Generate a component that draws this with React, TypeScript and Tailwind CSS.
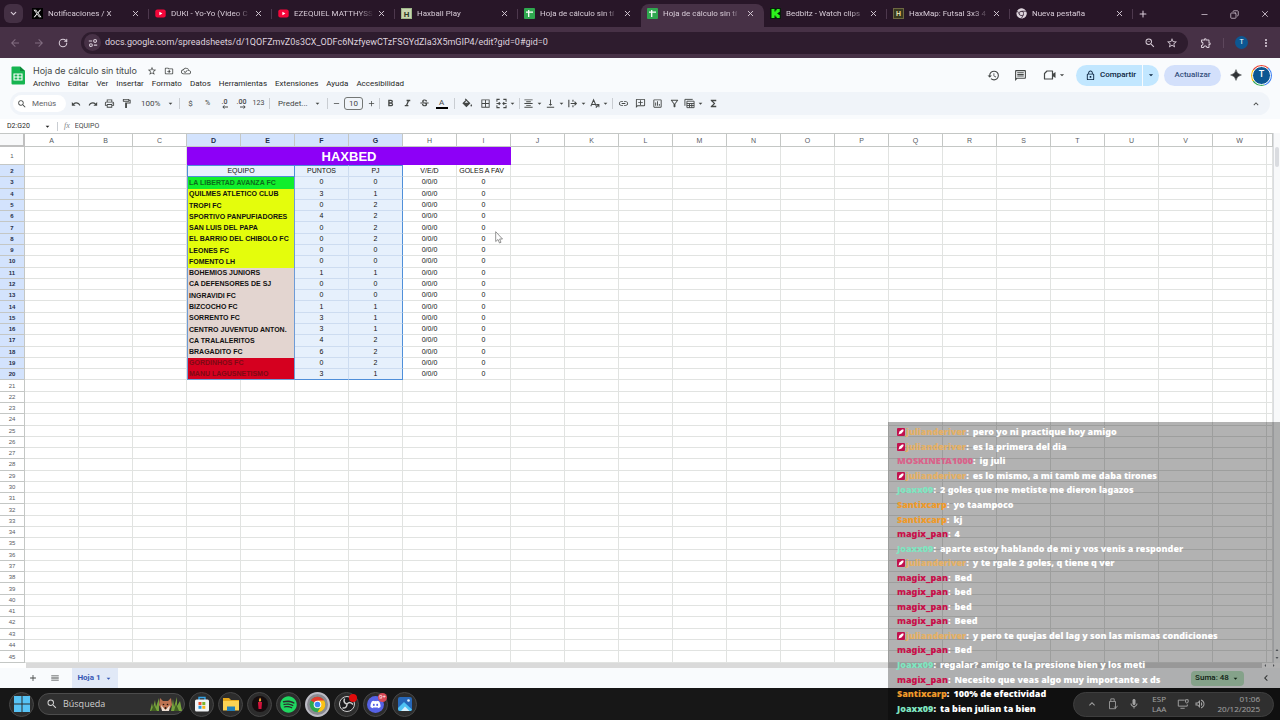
import type { ReactNode } from "react";
import { ChevronDown, Copy, Minus, Plus, RotateCw, X } from "lucide-react";
import { FaDiscord, FaSpotify, FaXTwitter } from "react-icons/fa6";
import {
     MdAdd,
     MdArrowBack,
     MdArrowDropDown,
     MdArrowForward,
     MdBorderAll,
     MdChevronLeft,
     MdFormatAlignCenter,
     MdFormatBold,
     MdFormatItalic,
     MdFunctions,
     MdHistory,
     MdInsertLink,
     MdKeyboardArrowUp,
     MdMenu,
     MdMoreVert,
     MdOutlineAddComment,
     MdOutlineCloudDone,
     MdOutlineComment,
     MdOutlineDriveFileMove,
     MdOutlineExtension,
     MdOutlineFilterAlt,
     MdOutlineFormatPaint,
     MdOutlineInsertChart,
     MdOutlineLock,
     MdOutlineMic,
     MdOutlinePrint,
     MdOutlineVolumeUp,
     MdRedo,
     MdRemove,
     MdSearch,
     MdStarBorder,
     MdStrikethroughS,
     MdUndo,
     MdVerticalAlignBottom,
     MdZoomOut,
} from "react-icons/md";

const tabs = [
     { title: "Notificaciones / X", icon: "x" },
     { title: "DUKI - Yo-Yo (Video C", icon: "youtube" },
     { title: "EZEQUIEL MATTHYSS", icon: "youtube" },
     { title: "Haxball Play", icon: "haxball" },
     { title: "Hoja de cálculo sin tí", icon: "sheets" },
     { title: "Hoja de cálculo sin tí", icon: "sheets", active: true },
     { title: "Bedbitz - Watch clips", icon: "kick" },
     { title: "HaxMap: Futsal 3x3 4", icon: "haxmap" },
     { title: "Nueva pestaña", icon: "chrome" },
];

const menus = ["Archivo", "Editar", "Ver", "Insertar", "Formato", "Datos", "Herramientas", "Extensiones", "Ayuda", "Accesibilidad"];

const columns = "ABCDEFGHIJKLMNOPQRSTUVW".split("");

const YELLOW = "bg-[#e4fd0c]";
const BEIGE = "bg-[#e3d5d0]";
const RED = "bg-[#d5001f] text-[#7d0a14]";

const teams = [
     { name: "LA LIBERTAD AVANZA FC", pts: 0, pj: 0, color: "bg-[#10ee2c] text-[#0c6b1c]" },
     { name: "QUILMES ATLETICO CLUB", pts: 3, pj: 1, color: YELLOW },
     { name: "TROPI FC", pts: 0, pj: 2, color: YELLOW },
     { name: "SPORTIVO PANPUFIADORES", pts: 4, pj: 2, color: YELLOW },
     { name: "SAN LUIS DEL PAPA", pts: 0, pj: 2, color: YELLOW },
     { name: "EL BARRIO DEL CHIBOLO FC", pts: 0, pj: 2, color: YELLOW },
     { name: "LEONES FC", pts: 0, pj: 0, color: YELLOW },
     { name: "FOMENTO LH", pts: 0, pj: 0, color: YELLOW },
     { name: "BOHEMIOS JUNIORS", pts: 1, pj: 1, color: BEIGE },
     { name: "CA DEFENSORES DE SJ", pts: 0, pj: 0, color: BEIGE },
     { name: "INGRAVIDI FC", pts: 0, pj: 0, color: BEIGE },
     { name: "BIZCOCHO FC", pts: 1, pj: 1, color: BEIGE },
     { name: "SORRENTO FC", pts: 3, pj: 1, color: BEIGE },
     { name: "CENTRO JUVENTUD ANTON.", pts: 3, pj: 1, color: BEIGE },
     { name: "CA TRALALERITOS", pts: 4, pj: 2, color: BEIGE },
     { name: "BRAGADITO FC", pts: 6, pj: 2, color: BEIGE },
     { name: "GORDINHOS FC", pts: 0, pj: 2, color: RED },
     { name: "MANU LAGUSNETISMO", pts: 3, pj: 1, color: RED },
];

const userColors: Record<string, string> = {
     julianderiver: "text-[#e5b064]",
     MOSKINETA1000: "text-[#d9628a]",
     Joaxx09: "text-[#7fe5c0]",
     Santixcarp: "text-[#f09a2a]",
     magix_pan: "text-[#c8104a]",
};

const messages = [
     ["julianderiver", "pero yo ni practique hoy amigo"],
     ["julianderiver", "es la primera del dia"],
     ["MOSKINETA1000", "ig juli"],
     ["julianderiver", "es lo mismo, a mi tamb me daba tirones"],
     ["Joaxx09", "2 goles que me metiste me dieron lagazos"],
     ["Santixcarp", "yo taampoco"],
     ["Santixcarp", "kj"],
     ["magix_pan", "4"],
     ["Joaxx09", "aparte estoy hablando de mi y vos venis a responder"],
     ["julianderiver", "y te rgale 2 goles, q tiene q ver"],
     ["magix_pan", "Bed"],
     ["magix_pan", "bed"],
     ["magix_pan", "bed"],
     ["magix_pan", "Beed"],
     ["julianderiver", "y pero te quejas del lag y son las mismas condiciones"],
     ["magix_pan", "Bed"],
     ["Joaxx09", "regalar? amigo te la presione bien y los meti"],
     ["magix_pan", "Necesito que veas algo muy importante x ds"],
     ["Santixcarp", "100% de efectividad"],
     ["Joaxx09", "ta bien julian ta bien"],
];

function ChromeLogo({ mono = false, className = "" }: { mono?: boolean; className?: string }) {
     const [red, yellow, green, blue] = mono ? ["#ddd4dc", "#ddd4dc", "#ddd4dc", "#ddd4dc"] : ["#e33b2e", "#fbc116", "#2da94f", "#3f86f4"];
     return (
          <svg viewBox="0 0 24 24" className={className}>
               <circle cx="12" cy="12" r="11" fill={green} />
               <path d="M12 12 L2.5 6.5 A11 11 0 0 1 21.5 6.5 Z" fill={red} />
               <path d="M12 6.5 H21.5 A11 11 0 0 1 12 23 L16.8 14.8 Z" fill={yellow} />
               {mono && <path d="M12 7 H22 M7.7 14.5 L2.7 6 M16.3 14.5 L11.5 23" stroke="#2a172a" strokeWidth="1.6" />}
               <circle cx="12" cy="12" r="5.4" fill={mono ? "#2a172a" : "#fff"} />
               <circle cx="12" cy="12" r="4" fill={blue} />
          </svg>
     );
}

function Favicon({ name }: { name: string }) {
     switch (name) {
          case "x":
               return (
                    <span className="grid size-[11px] shrink-0 place-items-center bg-black text-white">
                         <FaXTwitter className="size-[9px]" />
                    </span>
               );
          case "youtube":
               return (
                    <svg viewBox="0 0 11 11" className="size-[11px] shrink-0">
                         <rect x="0.300" y="1.500" width="10.400" height="8" rx="2" fill="#f5063a" />
                         <path d="M4.400 3.800 L7.400 5.500 L4.400 7.200 Z" fill="#fff" />
                    </svg>
               );
          case "haxball":
               return <span className="grid size-[11px] shrink-0 place-items-center border border-[#9fb88a] bg-[#c9d6b0] text-[8px] font-bold text-[#2f3b25]">H</span>;
          case "haxmap":
               return <span className="grid size-[11px] shrink-0 place-items-center border border-[#6d6742] bg-[#39391f] text-[7px] font-bold text-[#e6dfa8]">H</span>;
          case "sheets":
               return (
                    <svg viewBox="0 0 11 11" className="size-[11px] shrink-0">
                         <rect width="11" height="11" rx="1" fill="#2fa84f" />
                         <path d="M2 4.2 H9 M4.7 2 V9" stroke="#fff" strokeWidth="1.3" />
                    </svg>
               );
          case "kick":
               return (
                    <svg viewBox="0 0 11 11" className="size-[11px] shrink-0">
                         <rect width="11" height="11" fill="#07200a" />
                         <path d="M1.5 1 H4.5 V3.5 H5.5 V2.3 H6.7 V1 H9.7 V4 H8.5 V5 H7.4 V6 H8.5 V7 H9.7 V10 H6.7 V8.8 H5.5 V7.5 H4.5 V10 H1.5 Z" fill="#2cf41c" />
                    </svg>
               );
          default:
               return <ChromeLogo mono className="size-[11px] shrink-0" />;
     }
}

function TabStrip() {
     return (
          <div className="flex h-[27px] shrink-0 items-end bg-[#281628] text-[#d8ccd8]">
               <button aria-label="Buscar pestañas" className="mb-1 ml-1 grid size-[19px] shrink-0 place-items-center rounded-md bg-[#443044]">
                    <ChevronDown className="size-[9px]" strokeWidth={3} />
               </button>
               <div className="ml-[3px] flex min-w-0">
                    {tabs.map((tab, i) => (
                         <div key={i} className={`flex h-[23px] w-[123px] min-w-0 items-center rounded-t-lg pb-1 pl-[6px] ${tab.active ? "bg-[#473146]" : ""}`}>
                              <button className="flex min-w-0 flex-1 items-center gap-[5px] text-left text-[8px]">
                                   <Favicon name={tab.icon} />
                                   <span className="w-[80px] whitespace-nowrap [mask-image:linear-gradient(to_right,black_80%,transparent)]">{tab.title}</span>
                              </button>
                              <button aria-label="Cerrar" className="grid size-[14px] shrink-0 place-items-center">
                                   <X className="size-[9px]" strokeWidth={2.5} />
                              </button>
                              <span className={`ml-[6px] h-[10px] w-px shrink-0 ${tab.active || tabs[i + 1]?.active ? "" : "bg-[#4d384d]"}`} />
                         </div>
                    ))}
               </div>
               <button aria-label="Nueva pestaña" className="mb-[8px] ml-[5px] shrink-0">
                    <Plus className="size-[10px]" strokeWidth={2.5} />
               </button>
               <div className="mb-[8px] ml-auto flex gap-[21px] pr-[10px]">
                    <button aria-label="Minimizar"><Minus className="size-[9px]" /></button>
                    <button aria-label="Restaurar"><Copy className="size-[9px] -scale-x-100" /></button>
                    <button aria-label="Cerrar ventana"><X className="size-[10px]" /></button>
               </div>
          </div>
     );
}

function AddressBar() {
     return (
          <div className="flex h-[31px] shrink-0 items-center bg-[#473146] pr-2 pl-[9px] text-[#d8ccd8]">
               <button aria-label="Atrás" className="grid w-3 place-items-center text-[#816d80]"><MdArrowBack className="size-3" /></button>
               <button aria-label="Adelante" className="ml-3 grid w-3 place-items-center text-[#816d80]"><MdArrowForward className="size-3" /></button>
               <button aria-label="Recargar" className="ml-3 grid w-3 place-items-center"><RotateCw className="size-[10px]" strokeWidth={2.5} /></button>
               <div className="ml-3 flex h-[22px] flex-1 items-center rounded-full bg-[#2e1c2e] pr-[10px] pl-[3px]">
                    <span className="grid size-[17px] place-items-center rounded-full bg-[#473146]">
                         <svg viewBox="0 0 12 12" className="size-[10px]"><path d="M1 3.500 H5 M11 8.500 H7" stroke="currentColor" strokeWidth="1.300" /><circle cx="8.500" cy="3.500" r="1.700" fill="none" stroke="currentColor" strokeWidth="1.300" /><circle cx="3.500" cy="8.500" r="1.700" fill="none" stroke="currentColor" strokeWidth="1.300" /></svg>
                    </span>
                    <input
                         aria-label="Dirección"
                         readOnly
                         value="docs.google.com/spreadsheets/d/1QOFZmvZ0s3CX_ODFc6NzfyewCTzFSGYdZIa3X5mGIP4/edit?gid=0#gid=0"
                         className="ml-1 min-w-0 flex-1 bg-transparent text-[9px] text-[#dfd3df] outline-none"
                    />
                    <button aria-label="Zoom"><MdZoomOut className="size-3" /></button>
                    <button aria-label="Favorito" className="ml-[10px]"><MdStarBorder className="size-3" /></button>
               </div>
               <button aria-label="Extensiones" className="ml-3"><MdOutlineExtension className="size-3" /></button>
               <span className="ml-[11px] h-[10px] w-px bg-[#5d475c]" />
               <button aria-label="Perfil" className="ml-[11px] grid size-[13px] place-items-center rounded-full bg-[#0d5792] text-[7px] text-white">T</button>
               <button aria-label="Más" className="ml-3"><MdMoreVert className="size-3" /></button>
          </div>
     );
}

function DocHeader() {
     return (
          <header className="flex h-[34px] shrink-0 items-center bg-[#f9fbfd] pr-[8px] pl-[11px] text-[#444746]">
               <svg viewBox="0 0 14 19" className="h-[19px] w-[14px] shrink-0">
                    <path d="M1.5 0.5 H9 L14 5 V17.5 Q14 18.5 13 18.5 H1.5 Q0.5 18.5 0.5 17.5 V1.5 Q0.5 0.5 1.5 0.5 Z" fill="#17b551" />
                    <path d="M9 0.5 L14 5 H9 Z" fill="#0c8a3a" />
                    <path d="M3 8 H11 V14 H3 Z M3 11 H11 M7 8 V14" fill="none" stroke="#fff" strokeWidth="1.1" />
               </svg>
               <div className="ml-2 flex flex-col gap-px pt-1">
                    <div className="flex h-3 items-center">
                         <input aria-label="Nombre del documento" readOnly value="Hoja de cálculo sin título" className="w-[114px] bg-transparent font-[Inter,sans-serif] text-[9px] outline-none" />
                         <button aria-label="Destacar"><MdStarBorder className="size-[10px]" /></button>
                         <button aria-label="Mover" className="ml-[7px]"><MdOutlineDriveFileMove className="size-[10px]" /></button>
                         <button aria-label="Estado" className="ml-[7px]"><MdOutlineCloudDone className="size-[10px]" /></button>
                    </div>
                    <nav className="flex h-3 items-center gap-2 text-[8px] text-[#1f1f1f]">
                         {menus.map((m) => <button key={m}>{m}</button>)}
                    </nav>
               </div>
               <div className="ml-auto flex items-center">
                    <button aria-label="Historial"><MdHistory className="size-[13px]" /></button>
                    <button aria-label="Comentarios" className="ml-[14px]"><MdOutlineComment className="size-[13px] -scale-x-100" /></button>
                    <button aria-label="Reunión" className="ml-4 flex items-center">
                         <svg viewBox="0 0 14 12" className="h-3 w-[14px]"><path d="M9.500 9.500 V10 H1.500 V4.500 L4 2 H9.500 V10" fill="none" stroke="currentColor" strokeWidth="1.200" strokeLinejoin="round" /><path d="M9.500 5 L12.500 3 V9 L9.500 7 Z" fill="currentColor" /></svg>
                         <MdArrowDropDown className="size-[10px]" />
                    </button>
                    <div className="ml-[9px] flex h-[21px] overflow-hidden rounded-full bg-[#c2e7ff] text-[#0b2540]">
                         <button className="flex items-center gap-[4px] pr-[6px] pl-[9px] text-[8px] font-medium"><MdOutlineLock className="size-[11px]" />Compartir</button>
                         <button aria-label="Opciones para compartir" className="grid w-[17px] place-items-center border-l border-[#f9fbfd]"><MdArrowDropDown className="size-[10px]" /></button>
                    </div>
                    <button className="ml-[5px] h-[21px] w-[57px] rounded-full bg-[#d3e0fb] text-[8px] font-medium text-[#33507e]">Actualizar</button>
                    <button aria-label="Gemini" className="ml-[9px]">
                         <svg viewBox="0 0 12 12" className="size-3"><path d="M6 0.5 Q6.8 5.2 11.5 6 Q6.8 6.8 6 11.5 Q5.2 6.8 0.5 6 Q5.2 5.2 6 0.5 Z" fill="#303336" stroke="#303336" strokeWidth=".4" /></svg>
                    </button>
                    <button aria-label="Cuenta" className="ml-[9px] grid size-[21px] place-items-center rounded-full bg-[conic-gradient(#ea4335_0_12%,#4285f4_12%_45%,#34a853_45%_65%,#fbbc04_65%_85%,#ea4335_85%)]">
                         <span className="grid size-[19px] place-items-center rounded-full border border-white bg-[#0d5792] text-[9px] font-medium text-white">T</span>
                    </button>
               </div>
          </header>
     );
}

function Tool({ label, children, drop = false }: { label: string; children: ReactNode; drop?: boolean }) {
     return (
          <button aria-label={label} className={`flex h-4 shrink-0 items-center justify-center ${drop ? "w-[22px] gap-[1px]" : "w-[17px]"}`}>
               {children}
               {drop && <MdArrowDropDown className="size-[9px] shrink-0" />}
          </button>
     );
}

function Sep({ wide = false }: { wide?: boolean }) {
     return <span className={`h-[11px] w-px shrink-0 bg-[#c9cdd2] ${wide ? "mx-1" : "mx-[2px]"}`} />;
}

function DecimalIcon({ text, left = false }: { text: string; left?: boolean }) {
     return (
          <span className="flex flex-col items-end text-[7px] leading-[6px] font-medium">
               {text}
               <svg viewBox="0 0 6 4" className={`h-[4px] w-[6px] ${left ? "" : "-scale-x-100"}`}><path d="M6 2 H1 M2.5 0.4 L0.8 2 L2.5 3.6" fill="none" stroke="currentColor" strokeWidth="1" /></svg>
          </span>
     );
}

function Toolbar() {
     return (
          <div className="shrink-0 bg-[#f9fbfd] px-[10px] pb-1">
               <div className="flex h-[23px] items-center rounded-full bg-[#f0f4f9] px-[3px] text-[#444746]">
                    <label className="flex h-[17px] w-[53px] shrink-0 items-center rounded-full bg-white">
                         <MdSearch className="ml-1 size-[10px] shrink-0" />
                         <input aria-label="Menús" placeholder="Menús" className="ml-[5px] w-8 bg-transparent text-[8px] outline-none placeholder:text-[#5f6368]" />
                    </label>
                    <div className="ml-px flex">
                         <Tool label="Deshacer"><MdUndo className="size-[10px]" /></Tool>
                         <Tool label="Rehacer"><MdRedo className="size-[10px]" /></Tool>
                         <Tool label="Imprimir"><MdOutlinePrint className="size-[11px]" /></Tool>
                         <Tool label="Copiar formato"><MdOutlineFormatPaint className="size-[11px]" /></Tool>
                    </div>
                    <div className="ml-[6px] flex w-9 shrink-0 items-center">
                         <select aria-label="Zoom" className="w-[25px] appearance-none bg-transparent text-[8px] outline-none"><option>100%</option></select>
                         <MdArrowDropDown className="size-[9px] shrink-0" />
                    </div>
                    <Sep />
                    <Tool label="Moneda"><span className="text-[8px]">$</span></Tool>
                    <Tool label="Porcentaje"><span className="text-[7px]">%</span></Tool>
                    <Tool label="Reducir decimales"><DecimalIcon text=".0" left /></Tool>
                    <Tool label="Aumentar decimales"><DecimalIcon text=".00" /></Tool>
                    <Tool label="Más formatos"><span className="text-[7px]">123</span></Tool>
                    <Sep />
                    <div className="ml-[6px] flex w-[47px] shrink-0 items-center">
                         <select aria-label="Fuente" className="w-[35px] appearance-none bg-transparent text-[8px] outline-none"><option>Predet...</option></select>
                         <MdArrowDropDown className="size-[9px] shrink-0" />
                    </div>
                    <Sep />
                    <button aria-label="Reducir tamaño" className="grid w-3 shrink-0 place-items-center"><MdRemove className="size-[9px]" /></button>
                    <input aria-label="Tamaño de fuente" readOnly value="10" className="mx-[2px] h-[13px] w-[19px] shrink-0 rounded-[3px] border border-[#747775] bg-transparent text-center text-[8px] outline-none" />
                    <button aria-label="Aumentar tamaño" className="grid w-3 shrink-0 place-items-center"><MdAdd className="size-[9px]" /></button>
                    <Sep />
                    <Tool label="Negrita"><MdFormatBold className="size-[11px]" /></Tool>
                    <Tool label="Cursiva"><MdFormatItalic className="size-[11px]" /></Tool>
                    <Tool label="Tachado"><MdStrikethroughS className="size-[11px]" /></Tool>
                    <Tool label="Color de texto"><span className="w-3 border-b-2 border-black text-center text-[8px] leading-[9px]">A</span></Tool>
                    <Sep wide />
                    <div className="flex gap-px">
                         <Tool label="Color de relleno">
                              <svg viewBox="0 0 12 12" className="size-[11px]"><path d="M3.5 1 L8.3 5.8 L4.8 9.3 L1.3 5.8 L5.3 1.8 M1.5 5.8 H8" fill="none" stroke="currentColor" strokeWidth="1.3" /><path d="M2 6 H8 L4.8 9.2 Z M10 6.5 Q12 9 10 9.3 Q8.5 9 10 6.5Z" fill="currentColor" /></svg>
                         </Tool>
                         <Tool label="Bordes"><MdBorderAll className="size-[11px]" /></Tool>
                         <Tool label="Combinar celdas" drop>
                              <svg viewBox="0 0 12 12" className="size-[11px]"><path d="M1 4 V1.5 H4 M8 1.5 H11 V4 M1 8 V10.5 H4 M8 10.5 H11 V8 M0.5 6 H4.5 M11.5 6 H7.5 M3 4.5 L4.5 6 L3 7.5 M9 4.5 L7.5 6 L9 7.5" fill="none" stroke="currentColor" strokeWidth="1.1" /></svg>
                         </Tool>
                    </div>
                    <Sep />
                    <Tool label="Alineación horizontal" drop><MdFormatAlignCenter className="size-[11px]" /></Tool>
                    <Tool label="Alineación vertical" drop><MdVerticalAlignBottom className="size-[11px]" /></Tool>
                    <Tool label="Ajuste de texto" drop>
                         <svg viewBox="0 0 12 12" className="size-[11px]"><path d="M2 2 V10 M6.5 2 V4 M6.5 8 V10 M4 6 H10 M8.2 4 L10.2 6 L8.2 8" fill="none" stroke="currentColor" strokeWidth="1.2" /></svg>
                    </Tool>
                    <Tool label="Rotación de texto" drop>
                         <svg viewBox="0 0 12 12" className="size-[11px]"><path d="M2 9 L5 2 L8 9 M3 7 H7 M7.5 10.5 L10.5 7.5 M10.8 10 V7.2 H8" fill="none" stroke="currentColor" strokeWidth="1.1" /></svg>
                    </Tool>
                    <Sep />
                    <Tool label="Insertar enlace"><MdInsertLink className="size-[11px]" /></Tool>
                    <Tool label="Insertar comentario"><MdOutlineAddComment className="size-[11px] -scale-x-100" /></Tool>
                    <Tool label="Insertar gráfico"><MdOutlineInsertChart className="size-[11px]" /></Tool>
                    <Tool label="Crear filtro"><MdOutlineFilterAlt className="size-[11px]" /></Tool>
                    <Tool label="Vistas de filtro" drop>
                         <svg viewBox="0 0 12 12" className="size-[11px]"><path d="M1 8.5 V1.5 H9.5 M3.2 3.5 H11 V10.5 H3.2 Z M3 6 H11 M3 8.2 H11 M6 6 V10.5 M8.5 6 V10.5" fill="none" stroke="currentColor" strokeWidth="1" /></svg>
                    </Tool>
                    <Tool label="Funciones"><MdFunctions className="size-[11px]" /></Tool>
                    <button aria-label="Ocultar menús" className="mr-[6px] ml-auto"><MdKeyboardArrowUp className="size-[10px]" /></button>
               </div>
          </div>
     );
}

function FormulaBar() {
     return (
          <div className="flex h-[14px] shrink-0 items-center bg-white text-[7px] text-[#1f1f1f]">
               <input aria-label="Cuadro de nombres" readOnly value="D2:G20" className="ml-[7px] w-9 bg-transparent outline-none" />
               <MdArrowDropDown className="size-[9px]" />
               <span className="ml-[5px] h-[9px] w-px bg-[#c9cdd2]" />
               <span className="ml-[6px] font-['Liberation_Serif',serif] text-[8px] text-[#80868b] italic">fx</span>
               <input aria-label="Fórmula" readOnly value="EQUIPO" className="ml-[5px] flex-1 bg-transparent text-[#444746] outline-none" />
          </div>
     );
}

const cell = "border-r border-b border-[#e1e3e1]";
const colHead = "border-r border-b border-[#c4c7c5] p-0 text-[7px] leading-[11px]";
const blank = columns.slice(9).concat("X");

function RowHead({ n, selected = false }: { n: number; selected?: boolean }) {
     return (
          <th scope="row" className={`border-r border-b border-[#c4c7c5] p-0 text-[6px] ${selected ? "bg-[#d3e3fd] font-bold text-[#1f2f4a]" : "font-normal text-[#575b5f]"}`}>{n}</th>
     );
}

function SheetGrid() {
     return (
          <div className="flex min-h-0 flex-1 bg-white">
               <div className="min-w-0 flex-1 overflow-hidden">
                    <table className="h-full w-full table-fixed border-separate border-spacing-0 border-t border-[#c4c7c5] text-center font-['Liberation_Sans',Arial,sans-serif] text-[7px] leading-[10px] text-[#111]">
                         <colgroup>
                              <col className="w-[25px]" />
                              {columns.map((c) => <col key={c} className="w-[54px]" />)}
                              <col />
                         </colgroup>
                         <thead>
                              <tr className="h-[13px]">
                                   <th className="border-r-2 border-b-2 border-[#c0c0c0] bg-[#f8f9fa] p-0" />
                                   {columns.map((c) => (
                                        <th key={c} scope="col" className={`${colHead} ${"DEFG".includes(c) ? "bg-[#d3e3fd] font-bold text-[#1f2f4a]" : "font-normal text-[#575b5f]"}`}>{c}</th>
                                   ))}
                                   <th className={colHead} />
                              </tr>
                         </thead>
                         <tbody>
                              <tr className="h-[18px]">
                                   <RowHead n={1} />
                                   {columns.slice(0, 3).map((c) => <td key={c} className={cell} />)}
                                   <td colSpan={6} className="bg-[#8d00f7] p-0 text-[13px] leading-[17px] font-bold text-white">HAXBED</td>
                                   {blank.map((c) => <td key={c} className={cell} />)}
                              </tr>
                              <tr>
                                   <RowHead n={2} selected />
                                   {columns.slice(0, 3).map((c) => <td key={c} className={cell} />)}
                                   <td colSpan={2} className="border border-[#4f8fd9] bg-[#e9f1fd] p-0">EQUIPO</td>
                                   <td className="border-t border-r border-b border-t-[#4f8fd9] border-r-[#cddcf0] border-b-[#cddcf0] bg-[#e6f0fc] p-0">PUNTOS</td>
                                   <td className="border-t border-r border-b border-[#4f8fd9] border-b-[#cddcf0] bg-[#e6f0fc] p-0">PJ</td>
                                   <td className={`${cell} p-0`}>V/E/D</td>
                                   <td className={`${cell} p-0 pr-1 whitespace-nowrap`}>GOLES A FAV</td>
                                   {blank.map((c) => <td key={c} className={cell} />)}
                              </tr>
                              {teams.map((t, i) => {
                                   const last = i === teams.length - 1;
                                   return (
                                        <tr key={t.name}>
                                             <RowHead n={i + 3} selected />
                                             {columns.slice(0, 3).map((c) => <td key={c} className={cell} />)}
                                             <td colSpan={2} className={`border-r border-l border-[#6d9bd6] p-0 pl-px text-left font-bold whitespace-nowrap ${t.color} ${last ? "border-b" : ""}`}>{t.name}</td>
                                             <td className={`border-r border-b border-r-[#cddcf0] bg-[#e6f0fc] p-0 ${last ? "border-b-[#4f8fd9]" : "border-b-[#cddcf0]"}`}>{t.pts}</td>
                                             <td className={`border-r border-b border-r-[#4f8fd9] bg-[#e6f0fc] p-0 ${last ? "border-b-[#4f8fd9]" : "border-b-[#cddcf0]"}`}>{t.pj}</td>
                                             <td className={`${cell} p-0`}>0/0/0</td>
                                             <td className={`${cell} p-0`}>0</td>
                                             {blank.map((c) => <td key={c} className={cell} />)}
                                        </tr>
                                   );
                              })}
                              {Array.from({ length: 25 }, (_, i) => (
                                   <tr key={i}>
                                        <RowHead n={i + 21} />
                                        {columns.concat("X").map((c) => <td key={c} className={cell} />)}
                                   </tr>
                              ))}
                         </tbody>
                    </table>
               </div>
               <div className="flex w-[7px] shrink-0 flex-col border-l border-[#dadce0] bg-[#f8f9fa] pt-[14px] pb-[2px]">
                    <div className="mx-px h-5 rounded-full bg-[#dadce0]" />
                    <svg viewBox="0 0 6 14" className="mt-auto h-[14px] w-[6px]"><path d="M1.500 4 L3 2 L4.500 4 Z M1.500 10 L3 12 L4.500 10 Z" fill="#70757a" /></svg>
               </div>
          </div>
     );
}

function SheetTabs() {
     return (
          <div className="shrink-0 bg-[#f9fbfd] text-[#444746]">
               <div className="flex h-[5px] bg-white pl-[26px]">
                    <div className="flex-1 bg-[#dadada]" />
                    <svg viewBox="0 0 18 5" className="h-[5px] w-[18px]"><path d="M4 1 L2.500 2.500 L4 4 Z M11 1 L12.500 2.500 L11 4 Z" fill="#70757a" /></svg>
               </div>
               <div className="flex h-5 items-center pl-[28px]">
                    <button aria-label="Añadir hoja"><MdAdd className="size-[10px]" /></button>
                    <button aria-label="Todas las hojas" className="ml-3"><MdMenu className="size-[10px]" /></button>
                    <button className="ml-[12px] flex h-full w-[46px] items-center justify-center bg-[#e1e9f7] text-[8px] font-bold text-[#3457b4]">Hoja 1<MdArrowDropDown className="ml-[3px] size-[9px]" /></button>
                    <button className="ml-auto flex h-[15px] w-[53px] items-center justify-center rounded-sm bg-[#bfe8c6] text-[8px] font-medium text-[#15301c]">Suma: 48<MdArrowDropDown className="ml-[2px] size-[9px]" /></button>
                    <button aria-label="Panel lateral" className="mr-2 ml-4"><MdChevronLeft className="size-3" /></button>
               </div>
          </div>
     );
}

function TaskApp({ label, active = false, children }: { label: string; active?: boolean; children: ReactNode }) {
     return (
          <button aria-label={label} className={`relative grid size-[25px] shrink-0 place-items-center rounded-full ${active ? "border-2 border-[#bcbcc4] bg-[#8a8a92]" : "border border-[#474747] bg-[#2c2c2c]"}`}>
               {children}
          </button>
     );
}

function Taskbar() {
     return (
          <footer className="flex h-8 shrink-0 items-center bg-[#171717] pr-[6px] pl-[9px] font-['Open_Sans',sans-serif] text-[#d4d4d4]">
               <TaskApp label="Inicio">
                    <svg viewBox="0 0 16 16" className="size-4"><path d="M0 0 H7.5 V7.5 H0 Z M8.5 0 H16 V7.5 H8.5 Z M0 8.5 H7.5 V16 H0 Z M8.5 8.5 H16 V16 H8.5 Z" fill="#57c3f5" /></svg>
               </TaskApp>
               <label className="ml-1 flex h-[22px] w-[147px] items-center rounded-full border border-[#4c4c4c] bg-[#303030] pr-[2px] pl-[7px]">
                    <MdSearch className="size-3 shrink-0" />
                    <input aria-label="Búsqueda" placeholder="Búsqueda" className="ml-[5px] min-w-0 flex-1 bg-transparent text-[9px] outline-none placeholder:text-[#cfcfcf]" />
                    <svg viewBox="0 0 32 16" className="h-4 w-8 shrink-0">
                         <path d="M0 15 L2 7 L3 12 L5 4 L6 11 L9 2 L9 15 Z M21 15 L23 3 L24 11 L27 1 L27 10 L30 5 L32 15 Z" fill="#77a33c" />
                         <path d="M1 15 L4 9 L7 15 M24 15 L26 8 L29 15" fill="#405f22" />
                         <path d="M10 2 L13 5 H18 L21 2 L22 9 L19 14 H12 L9 9 Z" fill="#bd7250" />
                         <path d="M11 9 L15.500 14 L20 9 L19 15 H12 Z" fill="#eee0d4" />
                         <circle cx="13.500" cy="8.500" r=".8" fill="#221611" />
                         <circle cx="17.500" cy="8.500" r=".8" fill="#221611" />
                         <circle cx="15.500" cy="12" r="1" fill="#221611" />
                    </svg>
               </label>
               <div className="ml-1 flex gap-1">
                    <TaskApp label="Microsoft Store">
                         <svg viewBox="0 0 16 16" className="size-4"><path d="M5 4 V1.500 H11 V4" fill="none" stroke="#35a5e8" strokeWidth="1.400" /><rect x="1" y="3.500" width="14" height="12" rx="1.500" fill="#f1f4f6" /><path d="M4.500 6 H7.500 V9 H4.500 Z" fill="#e8502c" /><path d="M8.300 6 H11.300 V9 H8.300 Z" fill="#78b52c" /><path d="M4.500 9.800 H7.500 V12.800 H4.500 Z" fill="#2196e0" /><path d="M8.300 9.800 H11.300 V12.800 H8.300 Z" fill="#f8b518" /></svg>
                    </TaskApp>
                    <TaskApp label="Explorador">
                         <svg viewBox="0 0 18 16" className="h-4 w-[18px]"><path d="M1 2 H7 L9 4 H17 V14 H1 Z" fill="#e8a91c" /><path d="M1 5 H17 V14.500 H1 Z" fill="#fbd253" /><path d="M5 15 V10.500 H13 V15 Z" fill="#217fb8" /></svg>
                    </TaskApp>
                    <TaskApp label="Juego">
                         <svg viewBox="0 0 16 16" className="size-4"><circle cx="8" cy="8" r="8" fill="#140c0e" /><path d="M6 6 H10 L9.500 13 H6.500 Z" fill="#d3123c" /><path d="M8 1.500 Q10 4 8.500 5.500 H7 Q6.500 4 8 1.500 Z" fill="#f4a23a" /></svg>
                    </TaskApp>
                    <TaskApp label="Spotify"><FaSpotify className="size-[17px] text-[#1fd760]" /></TaskApp>
                    <TaskApp label="Chrome" active><ChromeLogo className="size-[17px]" /></TaskApp>
                    <TaskApp label="OBS">
                         <svg viewBox="0 0 18 18" className="size-[18px]"><circle cx="9" cy="9" r="7.500" fill="#1c1c1f" stroke="#cfcfcf" strokeWidth="1" /><path d="M9 9 Q5 8 6.500 3.500 M9 9 Q12 6 15 9.500 M9 9 Q9 13.500 4.500 13" fill="none" stroke="#cfcfcf" strokeWidth="1.500" /></svg>
                         <span className="absolute top-px right-px size-2 rounded-full bg-[#e00b0b]" />
                    </TaskApp>
                    <TaskApp label="Discord">
                         <span className="grid size-[17px] place-items-center rounded-full bg-[#5662e6] text-white"><FaDiscord className="size-[11px]" /></span>
                         <span className="absolute top-0 right-0 grid size-[9px] place-items-center rounded-full bg-[#d94856] text-[6px] text-white">9+</span>
                    </TaskApp>
                    <TaskApp label="Fotos">
                         <svg viewBox="0 0 16 16" className="size-4"><rect x="1" y="1" width="14" height="14" rx="2" fill="#2667b8" /><path d="M1 12 L7 6 L15 13.500 Q14.500 15 13 15 H3 Q1 15 1 13 Z" fill="#4fc3f3" /><path d="M4 15 L8 10.500 L12.500 15 Z" fill="#d8f0fc" /><circle cx="11.500" cy="4.500" r="1.300" fill="#e4f4ff" /></svg>
                    </TaskApp>
               </div>
               <div className="ml-auto flex h-[25px] w-[201px] items-center rounded-full border border-[#5a5a5a] bg-[#444] pr-[13px] pl-3 text-[8px] leading-[10px] text-[#e8e8e8]">
                    <button aria-label="Iconos ocultos"><MdKeyboardArrowUp className="size-3" /></button>
                    <svg viewBox="0 0 12 14" className="ml-[9px] h-3 w-[11px]"><path d="M4 4 V1 H8 V4 M2.500 4 H9.500 V12.500 H2.500 Z M8 10 L9.500 12 L12 9" fill="none" stroke="currentColor" /></svg>
                    <MdOutlineMic className="ml-[10px] size-3" />
                    <span className="ml-3 text-center">ESP<br />LAA</span>
                    <svg viewBox="0 0 14 12" className="ml-[11px] h-3 w-3"><path d="M9 1.500 H1.500 V8.500 H12 V6.500 M4 11 H9 M10 1 V4 Q11.500 6 13 4 V1 Z" fill="none" stroke="currentColor" strokeWidth="1.100" /></svg>
                    <MdOutlineVolumeUp className="ml-[5px] size-3" />
                    <time className="ml-auto text-right">01:06<br />20/12/2025</time>
               </div>
          </footer>
     );
}

function ChatOverlay() {
     return (
          <aside className="absolute right-0 bottom-0 flex h-[298px] w-[392px] flex-col bg-black/30 pt-[3px] pb-1 pl-[9px] font-['Noto_Sans',sans-serif] text-[9px] leading-[14px] font-black whitespace-nowrap text-white">
               {messages.map(([user, text], i) => (
                    <p key={i} className="flex flex-1 items-center">
                         {user === "julianderiver" && (
                              <svg viewBox="0 0 8 8" className="mr-[1px] size-2 shrink-0"><rect width="8" height="8" rx="1" fill="#c2104c" /><path d="M1.500 6.500 L2.500 3.500 L5 1.500 L6.500 1.500 V3 L4.500 5.500 Z" fill="#fff" /></svg>
                         )}
                         <span className={userColors[user]}>{user}</span>:
                         <span className="ml-1">{text}</span>
                    </p>
               ))}
          </aside>
     );
}

export default function App() {
     return (
          <div className="relative flex h-screen flex-col overflow-hidden bg-white font-[Roboto,sans-serif] text-[10px]">
               <TabStrip />
               <AddressBar />
               <DocHeader />
               <Toolbar />
               <FormulaBar />
               <SheetGrid />
               <SheetTabs />
               <Taskbar />
               <ChatOverlay />
               <svg viewBox="0 0 8 13" className="absolute top-[231px] left-[495px] h-[13px] w-2"><path d="M0.700 0.700 V10.500 L3 8.500 L4.500 12 L6 11.300 L4.600 8 H7.500 Z" fill="#fff" stroke="#777" strokeWidth=".8" /></svg>
          </div>
     );
}
